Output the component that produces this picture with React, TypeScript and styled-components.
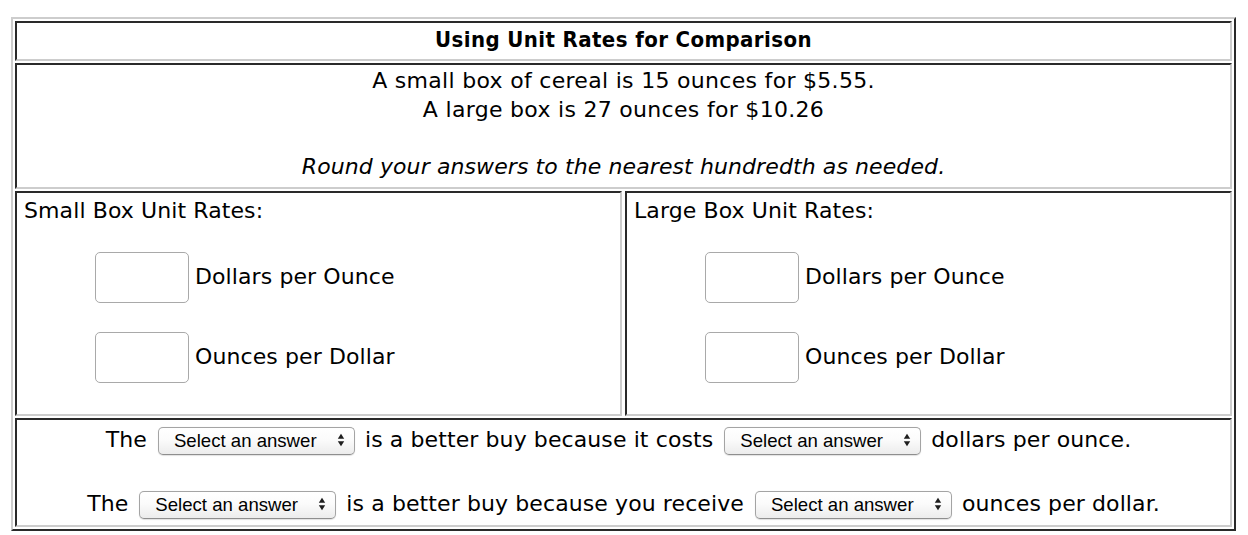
import React from "react";
import styled, { createGlobalStyle } from "styled-components";

const GlobalStyle = createGlobalStyle`
  html, body {
    margin: 0;
    padding: 0;
    background: #ffffff;
  }
  body {
    font-family: "DejaVu Sans", Verdana, sans-serif;
    font-size: 22px;
    letter-spacing: 0.1px;
    color: #000000;
  }
`;

const LIGHT = "#cdcdcd";
const DARK = "#2a2a2a";

/* Outer table frame: raised edge, light on top/left, dark on bottom/right */
const Frame = styled.div`
  box-sizing: border-box;
  width: 1225px;
  margin: 17px 0 0 11px;
  padding: 2px;
  border: 2px solid;
  border-color: ${LIGHT} ${DARK} ${DARK} ${LIGHT};
  display: grid;
  grid-template-columns: 1fr 1fr;
  grid-template-rows: 40px 126px 225px 109px;
  column-gap: 3px;
  row-gap: 2px;
`;

/* A table cell: sunken edge, dark on top/left, light on bottom/right */
const Cell = styled.div<{ $span?: boolean; $align?: "left" | "center" }>`
  box-sizing: border-box;
  grid-column: ${(p) => (p.$span ? "1 / -1" : "auto")};
  border: 2px solid;
  border-color: ${DARK} ${LIGHT} ${LIGHT} ${DARK};
  text-align: ${(p) => p.$align ?? "center"};
  line-height: 28.7px;
`;

const TitleCell = styled(Cell)`
  padding: 3px 4px 0;
  font-family: "DejaVu Sans Condensed", "DejaVu Sans", sans-serif;
  font-stretch: condensed;
  font-weight: bold;
  letter-spacing: 0.4px;
`;

const ProblemCell = styled(Cell)`
  padding: 2px 4px 0;
`;

const Line = styled.div<{ $italic?: boolean; $gapBefore?: boolean }>`
  font-style: ${(p) => (p.$italic ? "italic" : "normal")};
  margin-top: ${(p) => (p.$gapBefore ? "28.7px" : "0")};
  letter-spacing: ${(p) => (p.$italic ? "0.1px" : "0.3px")};
`;

const RatesCell = styled(Cell)`
  padding: 4px 7px 0;
  display: flex;
  flex-direction: column;
`;

const RatesHeading = styled.div`
  margin-bottom: 26px;
`;

const RateRow = styled.label`
  display: flex;
  align-items: center;
  gap: 6px;
  margin-left: 71px;
  & + & {
    margin-top: 29px;
  }
`;

const RateInput = styled.input`
  box-sizing: border-box;
  width: 94px;
  height: 51px;
  margin: 0;
  padding: 2px 6px;
  border: 1px solid #a9a9a9;
  border-radius: 5px;
  background: #ffffff;
  font: inherit;
  outline: none;
`;

const ConclusionCell = styled(Cell)`
  padding: 2px 4px 0;
`;

const Sentence = styled.p<{ $trail?: number }>`
  margin: 0;
  height: 36px;
  padding-right: ${(p) => p.$trail ?? 0}px;
  display: flex;
  align-items: center;
  justify-content: center;
  white-space: nowrap;
  & + & {
    margin-top: 28px;
  }
`;

const ChoiceWrap = styled.span`
  position: relative;
  display: inline-block;
  flex: none;
  margin: 0 10px 0 11px;
  width: 197px;
  height: 28px;
`;

const ChoiceSelect = styled.select`
  appearance: none;
  -webkit-appearance: none;
  box-sizing: border-box;
  width: 100%;
  height: 100%;
  margin: 0;
  padding: 0 26px 0 15px;
  border: 1px solid #a4a4a4;
  border-bottom-color: #8e8e8e;
  border-radius: 5px;
  background: linear-gradient(#ffffff 0%, #fbfbfb 45%, #ececec 100%);
  box-shadow: 0 0.5px 1px rgba(0, 0, 0, 0.12);
  font-family: "Liberation Sans", Arial, sans-serif;
  font-size: 18.6px;
  letter-spacing: 0;
  color: #000000;
  outline: none;
`;

/* Up/down stepper glyph drawn over the right end of the select */
const ChoiceArrows = styled.svg`
  position: absolute;
  right: 10px;
  top: 5px;
  width: 8px;
  height: 18px;
  pointer-events: none;
`;

function Choice() {
  return (
    <ChoiceWrap>
      <ChoiceSelect defaultValue="">
        <option value="">Select an answer</option>
        <option value="small">small box</option>
        <option value="large">large box</option>
      </ChoiceSelect>
      <ChoiceArrows viewBox="0 0 8 18" aria-hidden="true">
        <path d="M0.8 7.8 L4 2.8 L7.2 7.8 Z" fill="#1e1e1e" />
        <path d="M0.8 10.2 L4 15.2 L7.2 10.2 Z" fill="#1e1e1e" />
      </ChoiceArrows>
    </ChoiceWrap>
  );
}

function RatesPanel({ heading }: { heading: string }) {
  return (
    <RatesCell $align="left">
      <RatesHeading>{heading}</RatesHeading>
      <RateRow>
        <RateInput type="text" />
        <span>Dollars per Ounce</span>
      </RateRow>
      <RateRow>
        <RateInput type="text" />
        <span>Ounces per Dollar</span>
      </RateRow>
    </RatesCell>
  );
}

export default function App() {
  return (
    <>
      <GlobalStyle />
      <Frame>
        <TitleCell $span>Using Unit Rates for Comparison</TitleCell>
        <ProblemCell $span>
          <Line>A small box of cereal is 15 ounces for $5.55.</Line>
          <Line>A large box is 27 ounces for $10.26</Line>
          <Line $italic $gapBefore>
            Round your answers to the nearest hundredth as needed.
          </Line>
        </ProblemCell>
        <RatesPanel heading="Small Box Unit Rates:" />
        <RatesPanel heading="Large Box Unit Rates:" />
        <ConclusionCell $span>
          <Sentence $trail={10}>
            <span>The</span>
            <Choice />
            <span>is a better buy because it costs</span>
            <Choice />
            <span>dollars per ounce.</span>
          </Sentence>
          <Sentence>
            <span>The</span>
            <Choice />
            <span>is a better buy because you receive</span>
            <Choice />
            <span>ounces per dollar.</span>
          </Sentence>
        </ConclusionCell>
      </Frame>
    </>
  );
}
